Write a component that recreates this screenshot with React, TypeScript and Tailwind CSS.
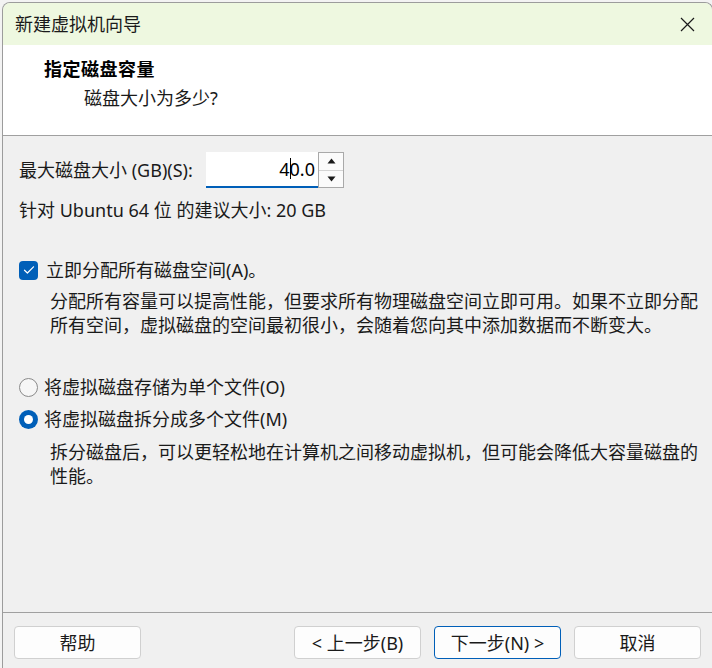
import React from "react";

/* -------- Small controls -------- */
function CheckBox({ checked }: { checked: boolean }) {
  return (
    <span className="flex h-[19px] w-[19px] shrink-0 items-center justify-center rounded-[4px] bg-[#005fb8]">
      {checked && (
        <svg width="12" height="10" viewBox="0 0 12 10" fill="none">
          <path
            d="M1.5 5.2 L4.4 8 L10.5 1.8"
            stroke="white"
            strokeWidth="1.2"
            strokeLinecap="round"
            strokeLinejoin="round"
          />
        </svg>
      )}
    </span>
  );
}

function Radio({ checked }: { checked: boolean }) {
  if (checked) {
    return (
      <span className="flex h-[19px] w-[19px] shrink-0 items-center justify-center rounded-full bg-[#005fb8]">
        <span className="h-[9px] w-[9px] rounded-full bg-white" />
      </span>
    );
  }
  return (
    <span className="h-[19px] w-[19px] shrink-0 rounded-full border border-[#8a8a8a] bg-[#f6f6f6]" />
  );
}

function SpinBox() {
  return (
    <div className="flex h-[36px]">
      <div className="flex w-[112px] items-center justify-end border-b-2 border-[#005fb8] bg-white pr-[3px] text-[18px] leading-none text-black">
        <span className="relative">
          4
          <span className="absolute right-[-1px] top-[-2px] h-[21px] w-px bg-black" />
        </span>
        0.0
      </div>
      <div className="flex w-[26px] flex-col border border-[#a9a9a9] bg-[#fbfbfb]">
        <div className="flex flex-1 items-center justify-center border-b border-[#d4d4d4]">
          <svg width="9" height="6" viewBox="0 0 9 6">
            <path d="M4.5 0.5 L8.5 5.5 L0.5 5.5 Z" fill="#1a1a1a" />
          </svg>
        </div>
        <div className="flex flex-1 items-center justify-center">
          <svg width="9" height="6" viewBox="0 0 9 6">
            <path d="M0.5 0.5 L8.5 0.5 L4.5 5.5 Z" fill="#1a1a1a" />
          </svg>
        </div>
      </div>
    </div>
  );
}

function Button({
  children,
  primary = false,
}: {
  children: React.ReactNode;
  primary?: boolean;
}) {
  return (
    <button
      className={
        primary
          ? "flex h-[33px] w-[127px] items-center justify-center rounded-[4px] border border-[#005fb8] bg-[#fdfdfd] text-[18px] leading-none text-[#1a1a1a]"
          : "flex h-[33px] w-[127px] items-center justify-center rounded-[4px] border border-[#d0d0d0] bg-[#fdfdfd] text-[18px] leading-none text-[#1a1a1a]"
      }
    >
      {children}
    </button>
  );
}

/* -------- Wizard window -------- */
export default function App() {
  return (
    <div className="h-[668px] w-[712px] overflow-hidden bg-[#f3f3f3] pl-[2px] pt-[2px] font-['Noto_Sans','Noto_Sans_CJK_SC',sans-serif] text-[#1a1a1a]">
      <div className="flex h-[700px] w-[711px] flex-col overflow-hidden rounded-t-[8px] border-l border-r border-t border-[#9c9c9c] bg-[#f0f0f0]">
        {/* Title bar */}
        <div className="flex h-[42px] shrink-0 items-center justify-between bg-[#eef8e0] pl-[12px] pr-[16px]">
          <span className="text-[18px] leading-none">新建虚拟机向导</span>
          <svg width="15" height="15" viewBox="0 0 15 15" fill="none" className="mr-[1px]">
            <path d="M1 1 L14 14 M14 1 L1 14" stroke="#1a1a1a" strokeWidth="1.2" />
          </svg>
        </div>

        {/* Header */}
        <div className="h-[91px] shrink-0 border-b border-[#a0a0a0] bg-white pl-[41px] pt-[13px]">
          <div className="text-[18px] font-bold leading-[22px] tracking-[0.5px] text-black">
            指定磁盘容量
          </div>
          <div className="mt-[7px] pl-[40px] text-[18px] leading-[22px]">
            磁盘大小为多少?
          </div>
        </div>

        {/* Body */}
        <div className="h-[477px] shrink-0 border-b border-[#a0a0a0] pl-[16px] pr-[8px] pt-[16px] text-[18px] leading-[24px]">
          <div className="flex items-center">
            <span className="w-[187px]">最大磁盘大小 (GB)(S):</span>
            <SpinBox />
          </div>
          <div className="mt-[10px]">针对 Ubuntu 64 位 的建议大小: 20 GB</div>

          <div className="mt-[36px] flex items-center gap-[8px] pl-0">
            <CheckBox checked />
            <span>立即分配所有磁盘空间(A)。</span>
          </div>
          <p className="mt-[7px] pl-[31px]">
            分配所有容量可以提高性能，但要求所有物理磁盘空间立即可用。如果不立即分配所有空间，虚拟磁盘的空间最初很小，会随着您向其中添加数据而不断变大。
          </p>

          <div className="mt-[38px] flex items-center gap-[6px]">
            <Radio checked={false} />
            <span>将虚拟磁盘存储为单个文件(O)</span>
          </div>
          <div className="mt-[8px] flex items-center gap-[6px]">
            <Radio checked />
            <span>将虚拟磁盘拆分成多个文件(M)</span>
          </div>
          <p className="mt-[9px] pl-[31px]">
            拆分磁盘后，可以更轻松地在计算机之间移动虚拟机，但可能会降低大容量磁盘的性能。
          </p>
        </div>

        {/* Footer buttons */}
        <div className="flex items-start justify-between pl-[11px] pr-[11px] pt-[13px]">
          <Button>帮助</Button>
          <div className="flex gap-[13px]">
            <Button>&lt; 上一步(B)</Button>
            <Button primary>下一步(N) &gt;</Button>
            <Button>取消</Button>
          </div>
        </div>
      </div>
    </div>
  );
}
